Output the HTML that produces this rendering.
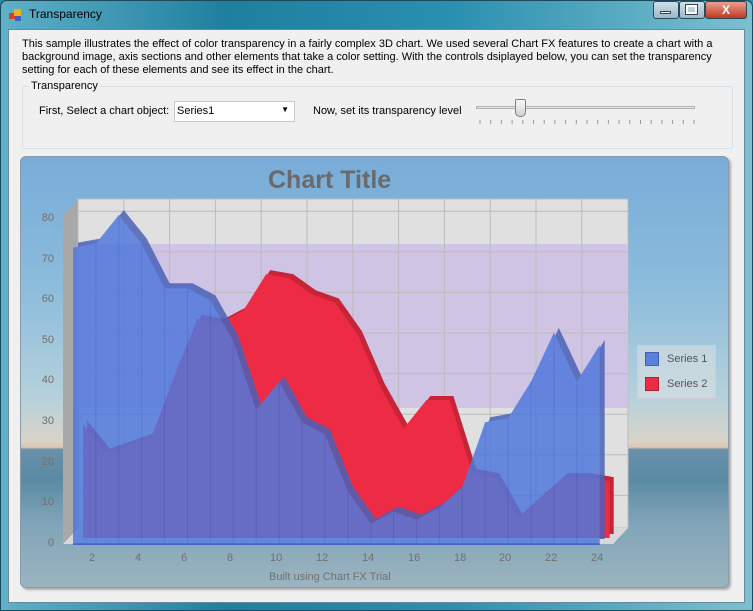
<!DOCTYPE html>
<html><head><meta charset="utf-8"><style>
*{margin:0;padding:0;box-sizing:border-box}
body{width:753px;height:611px;overflow:hidden;font-family:"Liberation Sans",sans-serif;background:#2a8aa8;position:relative}
.frame{position:absolute;left:0;top:0;width:753px;height:611px;background:linear-gradient(90deg,#5fb0c8 0%,#1f7f9f 30%,#2b8fb0 60%,#7cc0d0 100%);border-radius:7px 7px 0 0;border:1px solid #1d4a5a}
.title{position:absolute;left:29px;top:7px;font-size:12px;color:#000}
.client{position:absolute;left:8px;top:29px;width:737px;height:574px;background:#f0f0f0;border:1px solid #6a8a9a}
.desc{position:absolute;left:22px;top:38px;width:715px;font-size:11px;line-height:13px;color:#000}
.group{position:absolute;left:22px;top:86px;width:711px;height:63px;border:1px solid #d5dfe5;border-radius:3px}
.glabel{position:absolute;left:29px;top:80px;font-size:11px;background:#f0f0f0;padding:0 2px}
.lbl{position:absolute;font-size:11px}
.combo{position:absolute;left:174px;top:101px;width:121px;height:21px;background:#fff;border:1px solid #c8c8c8;font-size:11px;padding:3px 2px}
.btn{position:absolute;top:1px;height:18px;border:1px solid #2a4a5a;border-radius:3px}
</style></head><body>
<div class="frame"></div>
<svg style="position:absolute;left:9px;top:8px" width="14" height="14"><rect x="0" y="5" width="6" height="6" fill="#d84020"/><rect x="5" y="1" width="7" height="7" fill="#f0b020"/><rect x="6" y="8" width="6" height="5" fill="#4060c0"/></svg>
<div class="title">Transparency</div>
<div class="btn" style="left:653px;width:26px;background:linear-gradient(#cfe0ea,#9cb8c8)"></div>
<div class="btn" style="left:679px;width:26px;background:linear-gradient(#cfe0ea,#9cb8c8)"></div>
<div class="btn" style="left:705px;width:42px;background:linear-gradient(#e8a090,#c03820);color:#fff;font-weight:bold;font-size:12px;text-align:center;line-height:16px">X</div>
<div style="position:absolute;left:660px;top:11px;width:11px;height:3px;background:#fff;border:1px solid #345"></div>
<div style="position:absolute;left:686px;top:5px;width:11px;height:9px;border:2px solid #fff;outline:1px solid #345"></div>
<div class="client"></div>
<div class="desc">This sample illustrates the effect of color transparency in a fairly complex 3D chart. We used several Chart FX features to create a chart with a background image, axis sections and other elements that take a color setting. With the controls dsiplayed below, you can set the transparency setting for each of these elements and see its effect in the chart.</div>
<div class="group"></div><div class="glabel">Transparency</div>
<div class="lbl" style="left:39px;top:105px">First, Select a chart object:</div>
<div class="combo">Series1<span style="position:absolute;right:5px;top:3px;font-size:8px">▼</span></div>
<div class="lbl" style="left:313px;top:105px">Now, set its transparency level</div>
<div style="position:absolute;left:476px;top:106px;width:219px;height:3px;border:1px solid #b0b0b0;background:#e8e8e8"></div>
<div style="position:absolute;left:515px;top:99px;width:11px;height:18px;background:linear-gradient(#fafafa,#d0d0d0);border:1px solid #808080;border-radius:2px 2px 5px 5px"></div>
<svg style="position:absolute;left:478px;top:120px" width="220" height="8" id="ticks"></svg>
<div style="position:absolute;left:20px;top:156px;width:709px;height:432px;border-radius:6px;border:1px solid #8a9aa8;box-shadow:2px 2px 2px #aaa;overflow:hidden;background:linear-gradient(180deg,#78acd8 0%,#8cbcdc 30%,#b4d0dc 55%,#d8d4c8 66%,#dcc8b4 67.5%,#6a90a8 68%,#5a8aa4 75%,#80a4b8 85%,#9cb4c0 100%)">
<svg width="709" height="432" id="ch" style="position:absolute;left:0;top:0"></svg>
</div>
<script>
var t=document.getElementById('ticks'),s='';for(var i=0;i<=20;i++){var x=2+i*10.7;s+='<line x1="'+x+'" y1="0" x2="'+x+'" y2="4" stroke="#999"/>';}t.innerHTML=s;
var ox=20,oy=156,h='';
function X(i){return 72+(i-1)*22.9-ox}function Y(v){return 543-v*4.06-oy}
h+='<polygon points="'+(62-ox)+','+(214-oy)+' '+(77-ox)+','+(198-oy)+' '+(77-ox)+','+(527-oy)+' '+(62-ox)+','+(543-oy)+'" fill="#a8a8a8"/>';
h+='<rect x="'+(77-ox)+'" y="'+(198-oy)+'" width="550" height="329" fill="#e0e0e0" stroke="#bbb"/>';
h+='<rect x="'+(77-ox)+'" y="'+(243-oy)+'" width="550" height="164" fill="#d0c4e4"/>';
h+='<polygon points="'+(62-ox)+','+(543-oy)+' '+(77-ox)+','+(527-oy)+' '+(627-ox)+','+(527-oy)+' '+(612-ox)+','+(543-oy)+'" fill="#d8d8d8"/>';
for(var i=0;i<12;i++){var x=77+i*45.8-ox;h+='<line x1="'+x+'" y1="'+(198-oy)+'" x2="'+x+'" y2="'+(527-oy)+'" stroke="#bbb"/>';}
for(var v=10;v<=80;v+=10){var y=527-v*4.06-oy+8;h+='<line x1="'+(77-ox)+'" y1="'+y+'" x2="'+(627-ox)+'" y2="'+y+'" stroke="#bbb"/>';}
var b=[73,74,81,74,63,63,60,50,33,40,30,27,13,5,8,6,9,14,30,31,40,52,40,49];
var r=[28,21,23,25,40,54,53,56,65,64,60,58,50,37,27,34,34,16,15,5,10,15,15,14];
function poly(d,dx,dy,fill){var p=(X(1)+dx)+','+(Y(0)+dy);for(var i=0;i<24;i++)p+=' '+(X(i+1)+dx)+','+(Y(d[i])+dy);p+=' '+(X(24)+dx)+','+(Y(0)+dy);return '<polygon points="'+p+'" fill="'+fill+'"/>';}
h+=poly(r,14,-10,'#c82438');h+=poly(r,10,-6,'#ee2b44');
h+='<g opacity="0.85">'+poly(b,5,-5,'#4a62b8')+poly(b,0,0,'#5078dc');
for(var i=2;i<24;i++)h+='<line x1="'+X(i)+'" y1="'+Y(b[i-1])+'" x2="'+X(i)+'" y2="'+Y(0)+'" stroke="#3a5ac8" opacity=".5"/>';
h+='<line x1="'+X(1)+'" y1="'+Y(0)+'" x2="'+X(24)+'" y2="'+Y(0)+'" stroke="#3a5ac8" stroke-width="2"/></g>';
document.getElementById('ch').innerHTML=h;
</script>
<div style="position:absolute;left:20px;top:156px;width:709px;height:432px;font-size:11px;color:#707070">
<div style="position:absolute;left:248px;top:10px;font-size:25px;font-weight:bold;color:#6a6a6a">Chart Title</div>
<div style="position:absolute;left:20px;top:42px;line-height:40.6px;width:14px;text-align:right">80<br>70<br>60<br>50<br>40<br>30<br>20<br>10<br>0</div>
<div style="position:absolute;left:69px;top:396px;width:520px">
<span style="position:absolute;left:0">2</span><span style="position:absolute;left:46px">4</span><span style="position:absolute;left:92px">6</span><span style="position:absolute;left:138px">8</span><span style="position:absolute;left:181px">10</span><span style="position:absolute;left:227px">12</span><span style="position:absolute;left:273px">14</span><span style="position:absolute;left:319px">16</span><span style="position:absolute;left:365px">18</span><span style="position:absolute;left:410px">20</span><span style="position:absolute;left:456px">22</span><span style="position:absolute;left:502px">24</span></div>
<div style="position:absolute;left:249px;top:415px">Built using Chart FX Trial</div>
<div style="position:absolute;left:617px;top:189px;width:79px;height:54px;background:rgba(220,225,225,.55);border:1px solid #ccd">
<div style="position:absolute;left:7px;top:6px;width:14px;height:14px;background:#5a80dc;border:1px solid #4060b0"></div><div style="position:absolute;left:29px;top:7px;color:#555">Series 1</div>
<div style="position:absolute;left:7px;top:31px;width:14px;height:14px;background:#ee2b44;border:1px solid #b02030"></div><div style="position:absolute;left:29px;top:32px;color:#555">Series 2</div>
</div></div>
</body></html>
